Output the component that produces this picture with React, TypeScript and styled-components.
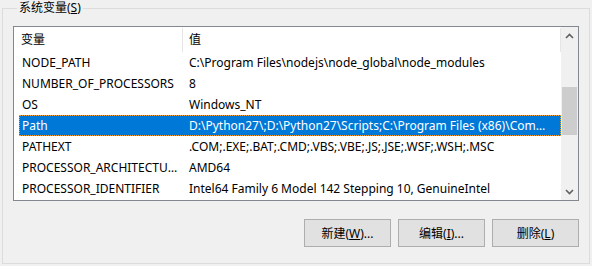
import React from "react";
import styled, { createGlobalStyle } from "styled-components";

const GlobalStyle = createGlobalStyle`
  html, body {
    margin: 0;
    padding: 0;
    background: #f0f0f0;
  }
  body {
    font-family: "Noto Sans", "Noto Sans CJK SC", sans-serif;
    font-size: 12px;
    color: #000;
  }
`;

interface EnvVar {
  name: string;
  value: string;
}

const vars: EnvVar[] = [
  { name: "NODE_PATH", value: "C:\\Program Files\\nodejs\\node_global\\node_modules" },
  { name: "NUMBER_OF_PROCESSORS", value: "8" },
  { name: "OS", value: "Windows_NT" },
  {
    name: "Path",
    value:
      "D:\\Python27\\;D:\\Python27\\Scripts;C:\\Program Files (x86)\\Common Files\\Oracle\\Java\\javapath",
  },
  { name: "PATHEXT", value: ".COM;.EXE;.BAT;.CMD;.VBS;.VBE;.JS;.JSE;.WSF;.WSH;.MSC" },
  { name: "PROCESSOR_ARCHITECTURE", value: "AMD64" },
  { name: "PROCESSOR_IDENTIFIER", value: "Intel64 Family 6 Model 142 Stepping 10, GenuineIntel" },
];

const SELECTED = 3;

const Window = styled.div`
  width: 592px;
  height: 266px;
  box-sizing: border-box;
  padding: 0 2px 2px 2px;
`;

const GroupBox = styled.fieldset`
  margin: 0;
  height: 264px;
  box-sizing: border-box;
  border: 1px solid #dcdcdc;
  padding: 0 10px 16px 10px;
  min-width: 0;
  display: flex;
  flex-direction: column;
`;

const Legend = styled.legend`
  padding: 0 2px;
  margin-left: 4px;
  line-height: 16px;
  height: 16px;
`;

const ListBox = styled.div`
  margin-top: 10px;
  height: 176px;
  box-sizing: border-box;
  border: 1px solid #828790;
  background: #fff;
  display: flex;
`;

const ListArea = styled.div`
  flex: 1;
  min-width: 0;
  display: flex;
  flex-direction: column;
  overflow: hidden;
`;

const HeaderRow = styled.div`
  height: 25px;
  display: grid;
  grid-template-columns: 169px minmax(0, 1fr);
  flex-shrink: 0;
`;

const HeaderCell = styled.div`
  box-sizing: border-box;
  padding-left: 7px;
  line-height: 24px;
  border-right: 1px solid #e5e5e5;
  margin-top: 1px;

  & + & {
    padding-left: 6px;
  }
`;

const Rows = styled.div`
  padding-left: 5px;
  min-width: 0;
`;

const Row = styled.div<{ $selected?: boolean }>`
  height: 21px;
  display: grid;
  grid-template-columns: 167px minmax(0, 1fr);
  align-items: center;
  box-sizing: border-box;
  background: ${(p) => (p.$selected ? "#0078d7" : "transparent")};
  color: ${(p) => (p.$selected ? "#fff" : "#000")};
  border: 1px dotted ${(p) => (p.$selected ? "#f0a030" : "transparent")};
`;

const Cell = styled.div<{ $padRight: number }>`
  min-width: 0;
  box-sizing: border-box;
  padding-left: 2px;
  padding-right: ${(p) => p.$padRight}px;
  white-space: nowrap;
  overflow: hidden;
  text-overflow: ellipsis;
`;

const ScrollBar = styled.div`
  width: 17px;
  flex-shrink: 0;
  background: #f0f0f0;
  display: flex;
  flex-direction: column;
  align-items: center;
`;

const ArrowButton = styled.div`
  height: 17px;
  width: 17px;
  display: flex;
  align-items: center;
  justify-content: center;
  flex-shrink: 0;
`;

const Track = styled.div`
  flex: 1;
  width: 15px;
  display: flex;
  flex-direction: column;
`;

const Thumb = styled.div`
  background: #cdcdcd;
  height: 48px;
  margin-top: 43px;
`;

const ButtonRow = styled.div`
  display: flex;
  justify-content: flex-end;
  gap: 7px;
  margin-top: 18px;
`;

const Button = styled.button`
  width: 87px;
  height: 28px;
  box-sizing: border-box;
  background: #e1e1e1;
  border: 1px solid #adadad;
  font-family: inherit;
  font-size: 12px;
  color: #000;
  padding: 0;
  margin: 0;
`;

const Chevron = ({ up }: { up?: boolean }) => (
  <svg width="9" height="6" viewBox="0 0 9 6">
    <path
      d={up ? "M1 5 L4.5 1.5 L8 5" : "M1 1 L4.5 4.5 L8 1"}
      fill="none"
      stroke="#606060"
      strokeWidth="1.6"
    />
  </svg>
);

export default function App() {
  return (
    <>
      <GlobalStyle />
      <Window>
        <GroupBox>
          <Legend>
            系统变量(<u>S</u>)
          </Legend>
          <ListBox>
            <ListArea>
              <HeaderRow>
                <HeaderCell>变量</HeaderCell>
                <HeaderCell>值</HeaderCell>
              </HeaderRow>
              <Rows>
                {vars.map((v, i) => (
                  <Row key={v.name} $selected={i === SELECTED}>
                    <Cell $padRight={8}>{v.name}</Cell>
                    <Cell $padRight={6}>{v.value}</Cell>
                  </Row>
                ))}
              </Rows>
            </ListArea>
            <ScrollBar>
              <ArrowButton>
                <Chevron up />
              </ArrowButton>
              <Track>
                <Thumb />
              </Track>
              <ArrowButton>
                <Chevron />
              </ArrowButton>
            </ScrollBar>
          </ListBox>
          <ButtonRow>
            <Button>
              新建(<u>W</u>)...
            </Button>
            <Button>
              编辑(<u>I</u>)...
            </Button>
            <Button>
              删除(<u>L</u>)
            </Button>
          </ButtonRow>
        </GroupBox>
      </Window>
    </>
  );
}
